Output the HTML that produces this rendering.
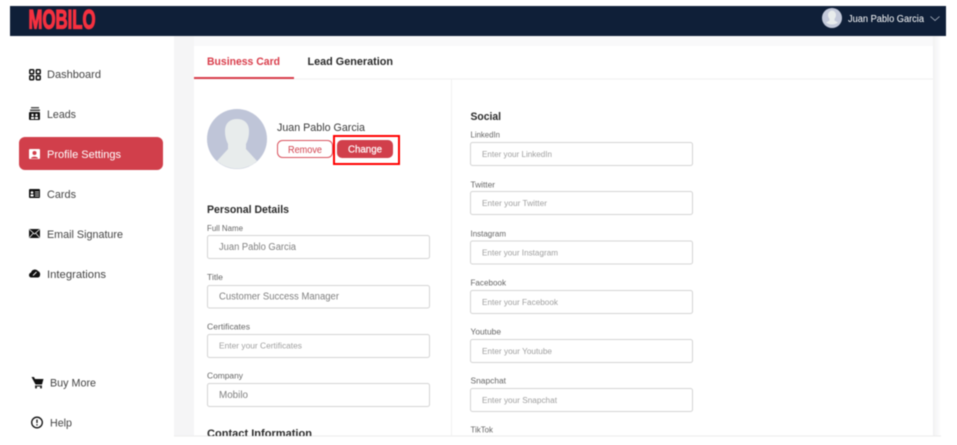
<!DOCTYPE html>
<html><head><meta charset="utf-8"><title>Mobilo</title>
<style>
html,body{margin:0;padding:0;background:#fff;width:957px;height:445px;overflow:hidden}
svg{display:block;filter:blur(.4px)}
text{font-family:"Liberation Sans",sans-serif}
.m{font-size:11px;fill:#444}
.l{font-size:8px;fill:#666}
.v{font-size:10px;fill:#808080}
.p{font-size:8px;fill:#a0a0a0}
.h{font-size:11px;font-weight:bold;fill:#2a2a2a}
.b{fill:#fff;stroke:#d4d4d4;stroke-width:1}
</style></head><body>
<svg width="957" height="445" viewBox="0 0 957 445" xmlns="http://www.w3.org/2000/svg">
<defs>
<linearGradient id="g" x1="0" x2="1" y1="0" y2="0"><stop offset="0" stop-color="#f1f1f2"/><stop offset="1" stop-color="#ffffff"/></linearGradient>
<clipPath id="c"><rect x="174" y="36" width="772" height="400"/></clipPath>
</defs>
<rect width="957" height="445" fill="#fff"/>
<rect x="174" y="36" width="20" height="400" fill="#f5f5f6"/>
<rect x="194" y="36" width="739" height="10" fill="#f9f9fa"/>
<rect x="933" y="36" width="8" height="400" fill="url(#g)"/>
<rect x="194" y="46" width="739" height="390" fill="#fff"/>
<rect x="174" y="435.500" width="767" height="1" fill="#ececec"/>

<!-- header -->
<rect x="10" y="6" width="936" height="30" fill="#0f1f38"/>
<text x="28.500" y="28.500" font-size="27" font-weight="bold" fill="#f5303f" stroke="#f5303f" stroke-width="1.300" textLength="67" lengthAdjust="spacingAndGlyphs">MOBILO</text>
<circle cx="832" cy="18" r="10" fill="#c3c9da"/>
<path d="M828 15a4 4.500 0 0 1 8 0c0 2-1 3-1.500 4v1.500l3.500 2a10 10 0 0 1-12 0l3.500-2V19c-.5-1-1.500-2-1.500-4z" fill="#e8ecec"/>
<text x="848" y="22" font-size="10" fill="#fff" textLength="76" lengthAdjust="spacingAndGlyphs">Juan Pablo Garcia</text>
<path d="M930.500 16.500l4.500 4 4.500-4" fill="none" stroke="#b9c0cd" stroke-width=".8"/>

<!-- sidebar -->
<rect x="19" y="137" width="144" height="33" rx="6" fill="#d13f4b"/>
<g fill="none" stroke="#111" stroke-width="1.500">
<rect x="29.800" y="69.800" width="3.900" height="3.900" rx=".8"/><rect x="36.300" y="69.800" width="3.900" height="3.900" rx=".8"/>
<rect x="29.800" y="75.800" width="3.900" height="3.900" rx=".8"/><rect x="36.300" y="75.800" width="3.900" height="3.900" rx=".8"/>
</g>
<text class="m" x="47" y="78" textLength="54" lengthAdjust="spacingAndGlyphs">Dashboard</text>

<rect x="31" y="107" width="8" height="1.500" fill="#555"/><rect x="30" y="109.500" width="10" height="1.500" fill="#444"/>
<rect x="29" y="112" width="11" height="8" rx="1" fill="#111"/>
<circle cx="32.500" cy="115" r="1.200" fill="#fff"/><circle cx="36.500" cy="115" r="1.200" fill="#fff"/>
<rect x="31" y="117" width="3" height="2" fill="#fff"/><rect x="35" y="117" width="3" height="2" fill="#fff"/>
<text class="m" x="47" y="118" textLength="29" lengthAdjust="spacingAndGlyphs">Leads</text>

<rect x="29" y="149" width="11" height="10" rx="1" fill="#fff"/>
<circle cx="34.500" cy="153" r="2" fill="#d13f4b"/><path d="M31 158.500c.5-2.500 6.500-2.500 7 0z" fill="#d13f4b"/>
<text x="47" y="158" font-size="11" fill="#fff" textLength="74" lengthAdjust="spacingAndGlyphs">Profile Settings</text>

<rect x="29" y="189" width="11" height="9" rx="1" fill="#111"/>
<circle cx="32" cy="192.500" r="1.300" fill="#fff"/><rect x="30.500" y="194.500" width="3" height="2" fill="#fff"/>
<path d="M35 192h4M35 194h4M35 196h4" stroke="#fff" stroke-width=".8"/>
<text class="m" x="47" y="198" textLength="29" lengthAdjust="spacingAndGlyphs">Cards</text>

<rect x="29" y="229" width="11" height="9" rx="1" fill="#111"/>
<path d="M29.500 229.500l5 4.500 5-4.500M29.500 237.500l4-4.500M39.500 237.500l-4-4.500" fill="none" stroke="#fff" stroke-width=".8"/>
<text class="m" x="47" y="238" textLength="76" lengthAdjust="spacingAndGlyphs">Email Signature</text>

<path d="M29 275.500a3 3 0 0 1 2-3 4 4 0 0 1 7-1.500 3.500 3.500 0 0 1 2 4.500 2.500 2.500 0 0 1-2 2h-7a2.500 2.500 0 0 1-2-2z" fill="#111"/>
<path d="M33 275.500l3.500-3.500" stroke="#fff" stroke-width=".9"/>
<text class="m" x="47" y="278" textLength="59" lengthAdjust="spacingAndGlyphs">Integrations</text>

<path d="M31.500 377h2.500l1 2h8.500l-1.500 5.500h-6.500z" fill="#111"/>
<rect x="35" y="385.500" width="7" height="1" fill="#111"/>
<circle cx="36" cy="387.500" r="1" fill="#111"/><circle cx="41" cy="387.500" r="1" fill="#111"/>
<text class="m" x="50" y="386.500" textLength="46" lengthAdjust="spacingAndGlyphs">Buy More</text>

<circle cx="37" cy="422.500" r="5.300" fill="none" stroke="#111" stroke-width="1.300"/>
<path d="M37 419.500v3.500M37 424.300v1.200" stroke="#111" stroke-width="1.300"/>
<text class="m" x="50" y="426.500" textLength="22" lengthAdjust="spacingAndGlyphs">Help</text>

<!-- tabs -->
<rect x="194" y="78.500" width="739" height="1" fill="#f1f1f1"/>
<rect x="194" y="77" width="100" height="2" fill="#d93d4b"/>
<text x="207" y="65" font-size="11" font-weight="bold" fill="#d93d4b" textLength="73" lengthAdjust="spacingAndGlyphs">Business Card</text>
<text x="307.500" y="65" font-size="11" font-weight="bold" fill="#2a2a2a" textLength="85.500" lengthAdjust="spacingAndGlyphs">Lead Generation</text>
<rect x="451" y="79" width="1" height="357" fill="#f1f1f1"/>

<!-- profile -->
<circle cx="237" cy="139" r="30" fill="#bfc5d8"/>
<path d="M225 131C225 123 230 119 237 119C244 119 249 123 249 131C249 136 248 140 246 144V149L257 161A30 30 0 0 1 217 161L228 149V144C226 140 225 136 225 131z" fill="#e8ecec"/>
<text x="277" y="131" font-size="11" fill="#3a3a3a" textLength="88" lengthAdjust="spacingAndGlyphs">Juan Pablo Garcia</text>
<rect x="277.500" y="140.500" width="55" height="17" rx="5" fill="#fff" stroke="#d9545f"/>
<text x="288" y="153" font-size="10" fill="#d13f4b" textLength="34" lengthAdjust="spacingAndGlyphs">Remove</text>
<rect x="337" y="140" width="56" height="18" rx="5" fill="#d13f4b"/>
<text x="348" y="152.500" font-size="10" fill="#fff" stroke="#fff" stroke-width=".2" textLength="34" lengthAdjust="spacingAndGlyphs">Change</text>
<rect x="334" y="136" width="65" height="28" fill="none" stroke="#f00" stroke-width="2"/>

<!-- personal -->
<text class="h" x="207" y="213" textLength="82" lengthAdjust="spacingAndGlyphs">Personal Details</text>
<text class="l" x="207" y="231" textLength="36" lengthAdjust="spacingAndGlyphs">Full Name</text>
<rect class="b" x="207.500" y="235.500" width="222" height="23" rx="2"/>
<text class="v" x="219" y="250" textLength="77" lengthAdjust="spacingAndGlyphs">Juan Pablo Garcia</text>
<text class="l" x="207" y="280" textLength="16" lengthAdjust="spacingAndGlyphs">Title</text>
<rect class="b" x="207.500" y="285.500" width="222" height="22.500" rx="2"/>
<text class="v" x="219" y="299.500" textLength="120" lengthAdjust="spacingAndGlyphs">Customer Success Manager</text>
<text class="l" x="207" y="329.500" textLength="43" lengthAdjust="spacingAndGlyphs">Certificates</text>
<rect class="b" x="207.500" y="334.500" width="222" height="23" rx="2"/>
<text class="p" x="219" y="348.500" textLength="83" lengthAdjust="spacingAndGlyphs">Enter your Certificates</text>
<text class="l" x="207" y="378.500" textLength="36" lengthAdjust="spacingAndGlyphs">Company</text>
<rect class="b" x="207.500" y="383.500" width="222" height="23" rx="2"/>
<text class="v" x="219" y="398" textLength="29" lengthAdjust="spacingAndGlyphs">Mobilo</text>
<g clip-path="url(#c)"><text class="h" x="207" y="437" textLength="105" lengthAdjust="spacingAndGlyphs">Contact Information</text></g>

<!-- social -->
<text class="h" x="470.500" y="120" textLength="30.500" lengthAdjust="spacingAndGlyphs">Social</text>
<text class="l" x="470.500" y="137.500" textLength="29.500" lengthAdjust="spacingAndGlyphs">LinkedIn</text>
<rect class="b" x="470.500" y="142.500" width="222" height="23" rx="2"/>
<text class="p" x="482" y="157" textLength="70" lengthAdjust="spacingAndGlyphs">Enter your LinkedIn</text>
<text class="l" x="470.500" y="187.500" textLength="24.500" lengthAdjust="spacingAndGlyphs">Twitter</text>
<rect class="b" x="470.500" y="191.500" width="222" height="23" rx="2"/>
<text class="p" x="482" y="206" textLength="65" lengthAdjust="spacingAndGlyphs">Enter your Twitter</text>
<text class="l" x="470.500" y="236.500" textLength="35.500" lengthAdjust="spacingAndGlyphs">Instagram</text>
<rect class="b" x="470.500" y="241" width="222" height="23" rx="2"/>
<text class="p" x="482" y="255.500" textLength="76" lengthAdjust="spacingAndGlyphs">Enter your Instagram</text>
<text class="l" x="470.500" y="285.500" textLength="35.500" lengthAdjust="spacingAndGlyphs">Facebook</text>
<rect class="b" x="470.500" y="290.500" width="222" height="23" rx="2"/>
<text class="p" x="482" y="305" textLength="76" lengthAdjust="spacingAndGlyphs">Enter your Facebook</text>
<text class="l" x="470.500" y="334.500" textLength="30.500" lengthAdjust="spacingAndGlyphs">Youtube</text>
<rect class="b" x="470.500" y="339.500" width="222" height="23" rx="2"/>
<text class="p" x="482" y="354" textLength="70" lengthAdjust="spacingAndGlyphs">Enter your Youtube</text>
<text class="l" x="470.500" y="383.500" textLength="35.500" lengthAdjust="spacingAndGlyphs">Snapchat</text>
<rect class="b" x="470.500" y="388.500" width="222" height="23" rx="2"/>
<text class="p" x="482" y="403" textLength="75" lengthAdjust="spacingAndGlyphs">Enter your Snapchat</text>
<g clip-path="url(#c)"><text class="l" x="470.500" y="432.500" textLength="22.500" lengthAdjust="spacingAndGlyphs">TikTok</text></g>
</svg>
</body></html>
